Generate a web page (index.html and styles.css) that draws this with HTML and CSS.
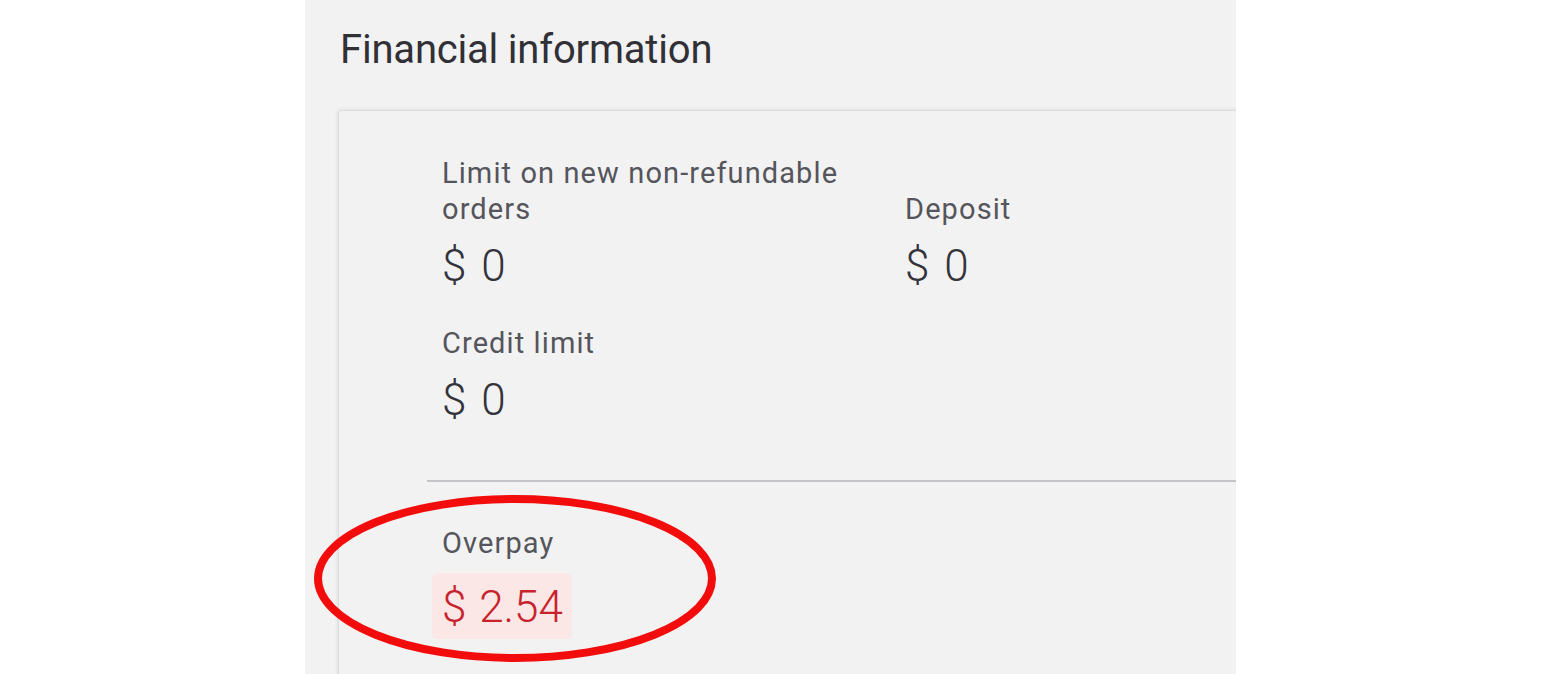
FILE: index.html
```html
<!DOCTYPE html>
<html lang="en">
<head>
    <meta charset="UTF-8">
    <meta name="viewport" content="width=device-width, initial-scale=1.0">
    <title>Financial information</title>
    <link rel="stylesheet" href="styles.css">
</head>
<body>
    <div class="page">
        <section class="panel">
            <h2 class="panel-title">Financial information</h2>

            <div class="card">
                <div class="fields">
                    <div class="field">
                        <div class="field-label">Limit on new non-refundable orders</div>
                        <div class="field-value">$ 0</div>
                    </div>
                    <div class="field">
                        <div class="field-label">Deposit</div>
                        <div class="field-value">$ 0</div>
                    </div>
                    <div class="field">
                        <div class="field-label">Credit limit</div>
                        <div class="field-value">$ 0</div>
                    </div>
                </div>

                <hr class="divider">

                <div class="field overpay">
                    <div class="field-label">Overpay</div>
                    <div class="field-value negative">$ 2.54</div>

                    <!-- annotation ring -->
                    <svg class="mark" width="402" height="167" viewBox="0 0 402 167">
                        <ellipse cx="201" cy="83.5" rx="197" ry="79.5" fill="none" stroke="#f20c0c" stroke-width="8"/>
                    </svg>
                </div>
            </div>
        </section>
    </div>
</body>
</html>
```

FILE: styles.css
```css
html, body {
    margin: 0;
    padding: 0;
    background: #fff;
}
body {
    font-family: Roboto, "Liberation Sans", sans-serif;
    color: #3c3c44;
}
.page {
    display: flex;
    height: 674px;
    padding-left: 305px;
}
.panel {
    width: 931px;
    height: 674px;
    overflow: hidden;
    background: #f2f2f2;
    padding: 27px 0 0 33px;
    box-sizing: border-box;
}
.panel-title {
    margin: 0 0 37px 2px;
    font-size: 40px;
    line-height: 46px;
    font-weight: 400;
    letter-spacing: -0.2px;
    color: #303036;
}
.card {
    width: 1000px;
    min-height: 700px;
    border: 1px solid #dcdce2;
    border-radius: 3px;
    box-shadow: 0 0 4px rgba(0, 0, 0, 0.12);
    padding: 44px 0 0 88px;
    box-sizing: border-box;
}
.fields {
    display: grid;
    grid-template-columns: 463px 463px;
    row-gap: 34px;
    align-items: end;
    padding-left: 15px;
}
.field-label {
    font-size: 29px;
    line-height: 36px;
    letter-spacing: 1.1px;
    color: #55555c;
    max-width: 430px;
}
.field-value {
    margin-top: 14px;
    font-size: 44px;
    line-height: 50px;
    font-weight: 300;
    word-spacing: 4px;
    color: #33333b;
}
.divider {
    width: 810px;
    margin: 55px 0 0 0;
    border: none;
    border-top: 2px solid #c4c4c8;
}
.overpay {
    position: relative;
    margin: 43px 0 0 15px;
}
.field-value.negative {
    display: inline-block;
    margin: 12px 0 0 -10px;
    padding: 9px 9px 7px 10px;
    border-radius: 5px;
    word-spacing: 2px;
    background: #fbe7e5;
    color: #c8232d;
}
.mark {
    position: absolute;
    left: -128px;
    top: -30px;
}
```
